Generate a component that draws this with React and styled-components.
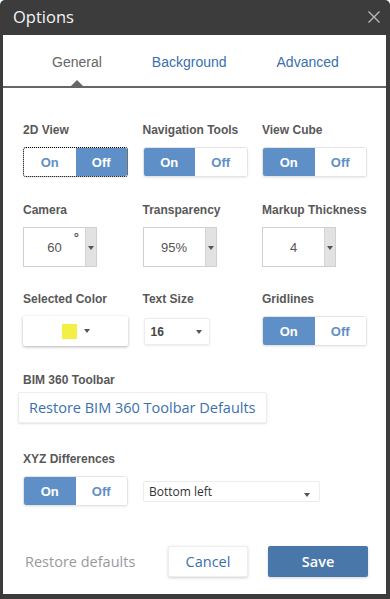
import React from 'react'
import styled, { createGlobalStyle } from 'styled-components';

const GlobalStyle = createGlobalStyle`
  html, body {
    margin: 0;
    padding: 0;
    background: #ffffff;
  }
  * { box-sizing: border-box; }
`;

const BLUE = '#5e8fc6';
const LINK = '#3b6fae';

// frame

const Dialog = styled.div`
  width: 390px;
  height: 599px;
  background: #3c3c3c;
  border-radius: 5px 5px 0 0;
  padding: 0 4px 5px 3px;
  display: flex;
  flex-direction: column;
`;

const Header = styled.div`
  height: 35px;
  display: flex;
  align-items: center;
  justify-content: space-between;
  padding: 0 5px 2px 10px;
`;

const Title = styled.div`
  font-family: "Open Sans", sans-serif;
  font-size: 16.5px;
  color: #f3f3f3;
`;

const Close = styled.button`
  border: none;
  background: none;
  padding: 0;
  width: 14px;
  height: 14px;
  display: flex;
  cursor: pointer;
`;

const Body = styled.div`
  flex: 1;
  background: #ffffff;
  display: flex;
  flex-direction: column;
`;

// tabs

const Tabs = styled.div`
  height: 53px;
  display: flex;
  gap: 50px;
  padding-left: 49px;
  border-bottom: 2px solid #666666;
`;

const Tab = styled.div`
  position: relative;
  padding-top: 19px;
  font-family: "Liberation Sans", Arial, sans-serif;
  font-size: 14px;
  color: ${p => (p.$active ? '#666666' : LINK)};
  cursor: pointer;

  &::after {
    content: '';
    display: ${p => (p.$active ? 'block' : 'none')};
    position: absolute;
    left: 50%;
    bottom: 0;
    margin-left: -6px;
    border-left: 6px solid transparent;
    border-right: 6px solid transparent;
    border-bottom: 6px solid #666666;
  }
`;

// content

const Content = styled.div`
  flex: 1;
  display: flex;
  flex-direction: column;
  padding: 34px 18px 0 20px;
`;

const Grid = styled.div`
  display: grid;
  grid-template-columns: 105px 105px 105px;
  column-gap: 14.5px;
  row-gap: ${p => p.$gap || 25}px;
  margin-bottom: ${p => p.$after || 0}px;
`;

const Field = styled.div`
  display: flex;
  flex-direction: column;
  align-items: flex-start;
  margin-top: ${p => p.$mt || 0}px;
`;

const Label = styled.div`
  font-family: "Liberation Sans", Arial, sans-serif;
  font-weight: bold;
  font-size: 12px;
  line-height: 16px;
  color: #585858;
  margin-bottom: ${p => p.$mb ?? 9}px;
`;

const ToggleWrap = styled.div`
  width: 105px;
  height: 30px;
  display: flex;
  border: 1px solid #e4e4e4;
  border-radius: 3px;
  overflow: hidden;
  box-shadow: 0 1px 2px rgba(0, 0, 0, 0.08);
  outline: ${p => (p.$focus ? '1px dotted #000' : 'none')};
  outline-offset: -1px;
`;

const ToggleHalf = styled.div`
  flex: 1;
  display: flex;
  align-items: center;
  justify-content: center;
  font-family: "Liberation Sans", Arial, sans-serif;
  font-weight: bold;
  font-size: 13px;
  background: ${p => (p.$on ? BLUE : '#ffffff')};
  color: ${p => (p.$on ? '#ffffff' : BLUE)};
  cursor: pointer;
`;

const Spinner = styled.div`
  width: 74px;
  height: 40px;
  display: flex;
  border: 1px solid #cfcfcf;
`;

const SpinValue = styled.div`
  position: relative;
  flex: 1;
  display: flex;
  align-items: center;
  justify-content: center;
  font-family: "Liberation Sans", Arial, sans-serif;
  font-size: 13px;
  color: #555555;
`;

const Degree = styled.span`
  position: absolute;
  right: 6px;
  top: 2px;
  font-size: 13px;
  font-weight: bold;
  color: #555555;
`;

const SpinArrow = styled.div`
  width: 11px;
  background: #e2e2e2;
  border-left: 1px solid #d4d4d4;
  display: flex;
  align-items: center;
  justify-content: center;
  padding-top: 1px;
`;

const Caret = styled.span`
  display: inline-block;
  width: 0;
  height: 0;
  border-left: ${p => p.$size || 4}px solid transparent;
  border-right: ${p => p.$size || 4}px solid transparent;
  border-top: ${p => (p.$size || 4) + 1}px solid #555555;
`;

const ColorButton = styled.button`
  width: 105px;
  height: 30px;
  border: none;
  border-radius: 2px;
  background: #ffffff;
  box-shadow: 0 1px 3px rgba(0, 0, 0, 0.3);
  display: flex;
  align-items: center;
  justify-content: center;
  gap: 7px;
  padding: 0 0 0 1px;
  cursor: pointer;
`;

const Swatch = styled.span`
  width: 15px;
  height: 15px;
  background: ${p => p.$color};
`;

const SizeSelect = styled.div`
  width: 66px;
  height: 27px;
  margin: 2px 0 0 1px;
  border: 1px solid #ececec;
  border-radius: 2px;
  box-shadow: 0 1px 2px rgba(0, 0, 0, 0.08);
  display: flex;
  align-items: center;
  justify-content: space-between;
  padding: 0 7px 0 6px;
  font-family: "Liberation Sans", Arial, sans-serif;
  font-weight: bold;
  font-size: 12px;
  color: #444444;
`;

const WideButton = styled.button`
  align-self: flex-start;
  margin-left: -5px;
  height: 31px;
  padding: 0 10px 1px 10px;
  border: 1px solid #eeeeee;
  border-radius: 2px;
  background: #ffffff;
  box-shadow: 0 1px 2px rgba(0, 0, 0, 0.12);
  font-family: "Open Sans", sans-serif;
  font-size: 14.5px;
  color: ${LINK};
  cursor: pointer;
`;

const Row = styled.div`
  display: flex;
  align-items: center;
  gap: 15px;
`;

const PosSelect = styled.div`
  width: 177px;
  height: 21px;
  border: 1px solid #ececec;
  border-radius: 2px;
  display: flex;
  align-items: center;
  justify-content: space-between;
  padding: 0 9px 0 5px;
  font-family: "Open Sans", sans-serif;
  font-size: 12px;
  color: #333333;

  & > span:last-child {
    margin-top: 8px;
  }
`;

// footer

const Footer = styled.div`
  display: flex;
  align-items: center;
  margin-top: 40px;
  padding-left: 2px;
`;

const Reset = styled.div`
  font-family: "Open Sans", sans-serif;
  font-size: 14.5px;
  color: #9a9a9a;
  margin-right: auto;
  cursor: pointer;
`;

const Action = styled.button`
  width: ${p => p.$w}px;
  height: 31px;
  margin-left: ${p => p.$ml || 0}px;
  border: ${p => (p.$primary ? 'none' : '1px solid #eeeeee')};
  border-radius: 2px;
  background: ${p => (p.$primary ? '#4a77aa' : '#ffffff')};
  box-shadow: 0 1px 3px rgba(0, 0, 0, 0.18);
  font-family: "Open Sans", sans-serif;
  font-size: 14.5px;
  font-weight: ${p => (p.$primary ? 600 : 400)};
  color: ${p => (p.$primary ? '#ffffff' : LINK)};
  cursor: pointer;
`;

function Toggle({ on, focus }) {
  return (
    <ToggleWrap $focus={focus}>
      <ToggleHalf $on={on}>On</ToggleHalf>
      <ToggleHalf $on={!on}>Off</ToggleHalf>
    </ToggleWrap>
  );
}

function NumberBox({ value, degree }) {
  return (
    <Spinner>
      <SpinValue>
        {value}
        {degree && <Degree>°</Degree>}
      </SpinValue>
      <SpinArrow>
        <Caret $size={3.5} />
      </SpinArrow>
    </Spinner>
  );
}

export default function App() {
  return (
    <>
      <GlobalStyle />
      <Dialog>
        <Header>
          <Title>Options</Title>
          <Close aria-label="Close">
            <svg width="14" height="14" viewBox="0 0 14 14">
              <path d="M1.5 1.5 L12.5 12.5 M12.5 1.5 L1.5 12.5" stroke="#b8b8b8" strokeWidth="1.4" fill="none" />
            </svg>
          </Close>
        </Header>
        <Body>
          <Tabs>
            <Tab $active>General</Tab>
            <Tab>Background</Tab>
            <Tab>Advanced</Tab>
          </Tabs>
          <Content>
            <Grid $gap={25} $after={24}>
              <Field>
                <Label>2D View</Label>
                <Toggle on={false} focus />
              </Field>
              <Field>
                <Label>Navigation Tools</Label>
                <Toggle on />
              </Field>
              <Field>
                <Label>View Cube</Label>
                <Toggle on />
              </Field>
              <Field>
                <Label>Camera</Label>
                <NumberBox value="60" degree />
              </Field>
              <Field>
                <Label>Transparency</Label>
                <NumberBox value="95%" />
              </Field>
              <Field>
                <Label>Markup Thickness</Label>
                <NumberBox value="4" />
              </Field>
            </Grid>
            <Grid $after={26}>
              <Field>
                <Label>Selected Color</Label>
                <ColorButton>
                  <Swatch $color="#f3f045" />
                  <Caret $size={3.5} />
                </ColorButton>
              </Field>
              <Field>
                <Label>Text Size</Label>
                <SizeSelect>
                  <span>16</span>
                  <Caret $size={3.5} />
                </SizeSelect>
              </Field>
              <Field>
                <Label>Gridlines</Label>
                <Toggle on />
              </Field>
            </Grid>
            <Field>
              <Label $mb={4}>BIM 360 Toolbar</Label>
              <WideButton>Restore BIM 360 Toolbar Defaults</WideButton>
            </Field>
            <Field $mt={28}>
              <Label>XYZ Differences</Label>
              <Row>
                <Toggle on />
                <PosSelect>
                  <span>Bottom left</span>
                  <Caret $size={3.5} />
                </PosSelect>
              </Row>
            </Field>
            <Footer>
              <Reset>Restore defaults</Reset>
              <Action $w={80}>Cancel</Action>
              <Action $w={100} $ml={20} $primary>Save</Action>
            </Footer>
          </Content>
        </Body>
      </Dialog>
    </>
  );
}
